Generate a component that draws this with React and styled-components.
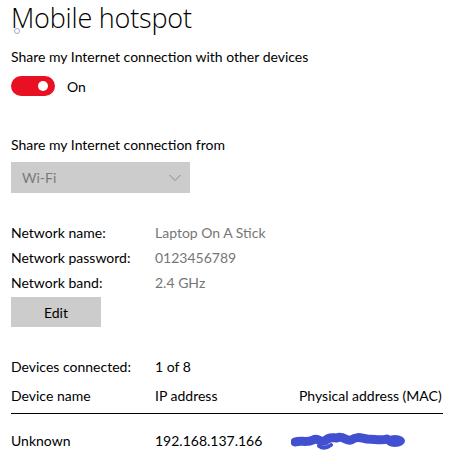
import styled, { createGlobalStyle } from "styled-components";

const GlobalStyle = createGlobalStyle`
  html, body {
    margin: 0;
    padding: 0;
    background: #ffffff;
  }
  body {
    font-family: Lato, "Open Sans", sans-serif;
    color: #000000;
  }
`;

const Page = styled.div`
  position: relative;
  width: 475px;
  height: 464px;
  overflow: hidden;
  padding: 0 11px;
  box-sizing: border-box;
  font-size: 14px;
`;

const Title = styled.h1`
  margin: 0;
  font-family: "Open Sans", sans-serif;
  font-size: 27px;
  font-weight: 300;
  line-height: 36px;
  letter-spacing: -0.2px;
`;

// leftover cursor ring from the screenshot
const CursorRing = styled.span`
  position: absolute;
  left: 14px;
  top: 28px;
  width: 4px;
  height: 4px;
  border: 1px solid #a8a8d8;
  border-radius: 50%;
`;

const Label = styled.div`
  margin-top: ${(p) => p.$gap || 0}px;
  line-height: 20px;
`;

const ToggleRow = styled.div`
  margin-top: 9px;
  display: flex;
  align-items: center;
  height: 20px;
`;

const Switch = styled.div`
  position: relative;
  width: 44px;
  height: 20px;
  border-radius: 10px;
  background: #e81123;
  margin-right: 12px;

  &::after {
    content: "";
    position: absolute;
    top: 5px;
    right: 7px;
    width: 10px;
    height: 10px;
    border-radius: 50%;
    background: #ffffff;
  }
`;

const Dropdown = styled.div`
  margin-top: 7px;
  width: 179px;
  height: 31px;
  background: #cccccc;
  display: flex;
  align-items: center;
  justify-content: space-between;
  padding: 0 9px 0 11px;
  box-sizing: border-box;
  color: #7a7a7a;
`;

const InfoGrid = styled.div`
  margin-top: 27px;
  display: grid;
  grid-template-columns: 144px 1fr;
  grid-auto-rows: 25px;
  align-items: center;
`;

const Value = styled.span`
  color: ${(p) => (p.$muted ? "#767676" : "#000000")};
`;

const Button = styled.div`
  margin-top: 2px;
  width: 90px;
  height: 30px;
  background: #cccccc;
  display: flex;
  align-items: center;
  justify-content: center;
`;

const Table = styled.div`
  width: 432px;
  display: grid;
  grid-template-columns: 144px 144px 1fr;
`;

const Cell = styled.div`
  line-height: 20px;
  display: flex;
  align-items: center;
  white-space: nowrap;
`;

const HeadCell = styled(Cell)`
  height: 34px;
  border-bottom: 1px solid #000000;
`;

const BodyCell = styled(Cell)`
  padding-top: 16px;
`;

const Chevron = () => (
  <svg width="12" height="8" viewBox="0 0 12 8">
    <path d="M0.5 1 L6 6.5 L11.5 1" fill="none" stroke="#8a8a8a" strokeWidth="1" />
  </svg>
);

const Scribble = () => (
  <svg width="118" height="22" viewBox="0 0 118 22" style={{ marginLeft: -8 }}>
    <path
      d="M4 12 C10 10 16 13 22 10 C26 7 30 13 34 11 C38 6 42 8 46 8 C52 5 56 12 60 10 C66 6 70 8 76 9 C84 9 90 11 96 9"
      fill="none"
      stroke="#4150d0"
      strokeWidth="9"
      strokeLinecap="round"
      strokeLinejoin="round"
    />
    <ellipse cx="104" cy="11" rx="10" ry="6" fill="#4150d0" />
    <path d="M28 16 C32 19 36 18 40 15" fill="none" stroke="#4150d0" strokeWidth="4" strokeLinecap="round" />
  </svg>
);

export default function App() {
  return (
    <>
      <GlobalStyle />
      <Page>
        <Title>Mobile hotspot</Title>
        <CursorRing />
        <Label $gap={11}>Share my Internet connection with other devices</Label>
        <ToggleRow>
          <Switch />
          On
        </ToggleRow>

        <Label $gap={39}>Share my Internet connection from</Label>
        <Dropdown>
          Wi-Fi
          <Chevron />
        </Dropdown>

        <InfoGrid>
          <span>Network name:</span>
          <Value $muted>Laptop On A Stick</Value>
          <span>Network password:</span>
          <Value $muted>0123456789</Value>
          <span>Network band:</span>
          <Value $muted>2.4 GHz</Value>
        </InfoGrid>
        <Button>Edit</Button>

        <InfoGrid>
          <span>Devices connected:</span>
          <Value>1 of 8</Value>
        </InfoGrid>

        <Table>
          <HeadCell>Device name</HeadCell>
          <HeadCell>IP address</HeadCell>
          <HeadCell>Physical address (MAC)</HeadCell>
          <BodyCell>Unknown</BodyCell>
          <BodyCell>192.168.137.166</BodyCell>
          <BodyCell>
            <Scribble />
          </BodyCell>
        </Table>
      </Page>
    </>
  );
}
